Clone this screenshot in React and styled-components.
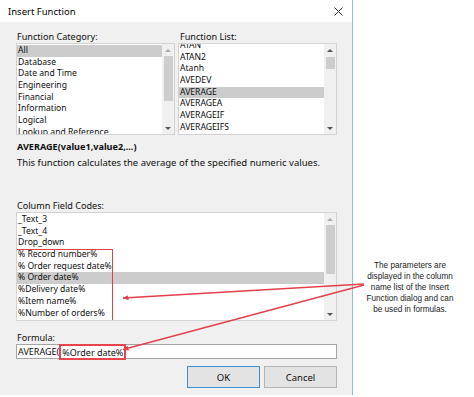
import React from 'react';
import styled, { createGlobalStyle } from 'styled-components';

const GlobalStyle = createGlobalStyle`
  html, body { margin: 0; padding: 0; background: #fff; }
  body { font-family: "Noto Sans", "Open Sans", sans-serif; }
`;

const Page = styled.div`
  position: relative;
  display: flex;
  width: 474px;
  height: 397px;
  overflow: hidden;
`;

const Dialog = styled.div`
  width: 352px;
  height: 395px;
  flex-shrink: 0;
  border-right: 1px solid #8fbde3;
  display: flex;
  flex-direction: column;
  background: #f0f0f0;
  font-size: 9.5px;
  color: #0e0e0e;
`;

const TitleBar = styled.div`
  height: 22px;
  background: #fff;
  display: flex;
  align-items: center;
  justify-content: space-between;
  padding: 0 9px 0 8px;
  font-size: 9.5px;
  color: #000;
`;

const Body = styled.div`
  flex: 1;
  padding: 8px 15px 0 16px;
  display: flex;
  flex-direction: column;
`;

const TopRow = styled.div`
  display: grid;
  grid-template-columns: 159px 159px;
  column-gap: 3px;
`;

const Field = styled.div`
  display: flex;
  flex-direction: column;
`;

const Label = styled.div`
  height: 13px;
  line-height: 13px;
  font-size: 9.1px;
  padding-left: ${p => p.$indent || 1}px;
  margin-top: ${p => p.$top || 0}px;
  white-space: nowrap;
`;

const ListBox = styled.div`
  height: ${p => p.$height}px;
  box-sizing: border-box;
  border: 1px solid #d3d3d3;
  background: #fff;
  display: flex;
`;

const Items = styled.div`
  flex: 1;
  overflow: hidden;
  padding-top: 1px;
`;

const ItemsInner = styled.div`
  margin-top: ${p => p.$offset || 0}px;
`;

const Row = styled.div`
  height: 11.7px;
  line-height: 11.7px;
  font-size: 8.6px;
  padding-left: 1px;
  white-space: nowrap;
  background: ${p => (p.$selected ? '#cccccc' : 'transparent')};
`;

const MarkedGroup = styled.div`
  position: relative;

  &::after {
    content: '';
    position: absolute;
    left: -1px;
    top: 0;
    width: 97px;
    height: 72px;
    box-sizing: border-box;
    border: 1.5px solid #e2404a;
  }
`;

const Scrollbar = styled.div`
  width: 12px;
  background: #f0f0f0;
  display: flex;
  flex-direction: column;
  align-items: center;
`;

const ArrowZone = styled.div`
  height: 12px;
  flex-shrink: 0;
  display: flex;
  align-items: center;
  justify-content: center;
`;

const Arrow = styled.div`
  width: 0;
  height: 0;
  border-left: 3px solid transparent;
  border-right: 3px solid transparent;
  ${p => (p.$up ? 'border-bottom' : 'border-top')}: 3px solid ${p => (p.$dim ? '#ababab' : '#555')};
`;

const Track = styled.div`
  flex: 1;
  width: 100%;
  display: flex;
  justify-content: center;
`;

const Thumb = styled.div`
  width: 9px;
  margin-top: ${p => p.$top}px;
  height: ${p => p.$height}px;
  background: #cdcdcd;
`;

const Signature = styled.div`
  margin-top: 5px;
  height: 13px;
  line-height: 13px;
  font-size: 9.1px;
  font-weight: 700;
  padding-left: 1px;
`;

const Description = styled.div`
  margin-top: 3px;
  height: 13px;
  line-height: 13px;
  padding-left: 1px;
  white-space: nowrap;
`;

const FormulaBox = styled.div`
  height: 15px;
  box-sizing: border-box;
  border: 1px solid #a5a5a5;
  background: #fff;
  display: flex;
  align-items: center;
  padding-left: 1px;
  font-size: 9px;
  white-space: nowrap;
`;

const Mark = styled.span`
  display: flex;
  align-items: center;
  height: 16px;
  box-sizing: border-box;
  margin: 0 0 -1px;
  padding: 0 1px;
  border: 2px solid #e8444e;
`;

const Buttons = styled.div`
  margin-top: 7px;
  display: flex;
  justify-content: flex-end;
  gap: 4px;
`;

const Button = styled.div`
  width: 73px;
  height: 22px;
  box-sizing: border-box;
  border: 1px solid ${p => (p.$primary ? '#3d8ed1' : '#b4b4b4')};
  background: #e3e3e3;
  display: flex;
  align-items: center;
  justify-content: center;
  font-size: 9.5px;
`;

const Annotation = styled.div`
  flex: 1;
  padding: 260px 7px 0 0;
  text-align: center;
  font-family: "Liberation Sans", Arial, sans-serif;
  font-size: 8.2px;
  line-height: 11px;
  color: #1a1a1a;
`;

const Overlay = styled.svg`
  position: absolute;
  left: 0;
  top: 0;
  pointer-events: none;
`;

const ListScroll = ({ thumbTop, thumbHeight, upDim, downDim }) => (
  <Scrollbar>
    <ArrowZone><Arrow $up $dim={upDim} /></ArrowZone>
    <Track><Thumb $top={thumbTop} $height={thumbHeight} /></Track>
    <ArrowZone><Arrow $dim={downDim} /></ArrowZone>
  </Scrollbar>
);

const categories = ['All', 'Database', 'Date and Time', 'Engineering', 'Financial', 'Information', 'Logical', 'Lookup and Reference'];
const functions = ['ATAN', 'ATAN2', 'Atanh', 'AVEDEV', 'AVERAGE', 'AVERAGEA', 'AVERAGEIF', 'AVERAGEIFS'];
const plainCodes = ['_Text_3', '_Text_4', 'Drop_down'];
const fieldCodes = ['% Record number%', '% Order request date%', '% Order date%', '%Delivery date%', '%Item name%', '%Number of orders%'];

export default function App() {
  return (
    <>
      <GlobalStyle />
      <Page>
        <Dialog>
          <TitleBar>
            <span>Insert Function</span>
            <svg width="9" height="9" viewBox="0 0 9 9">
              <path d="M0.5 0.5 L8.5 8.5 M8.5 0.5 L0.5 8.5" stroke="#333" strokeWidth="1" />
            </svg>
          </TitleBar>
          <Body>
            <TopRow>
              <Field>
                <Label>Function Category:</Label>
                <ListBox $height={92}>
                  <Items>
                    {categories.map((c, i) => (
                      <Row key={c} $selected={i === 0}>{c}</Row>
                    ))}
                  </Items>
                  <ListScroll thumbTop={0} thumbHeight={45} upDim />
                </ListBox>
              </Field>
              <Field>
                <Label $indent={2}>Function List:</Label>
                <ListBox $height={92}>
                  <Items>
                    <ItemsInner $offset={-5}>
                      {functions.map((f, i) => (
                        <Row key={f} $selected={i === 4}>{f}</Row>
                      ))}
                    </ItemsInner>
                  </Items>
                  <ListScroll thumbTop={1} thumbHeight={12} />
                </ListBox>
              </Field>
            </TopRow>
            <Signature>AVERAGE(value1,value2,...)</Signature>
            <Description>This function calculates the average of the specified numeric values.</Description>
            <Label $top={30}>Column Field Codes:</Label>
            <ListBox $height={109}>
              <Items>
                {plainCodes.map(c => <Row key={c}>{c}</Row>)}
                <MarkedGroup>
                  {fieldCodes.map((c, i) => (
                    <Row key={c} $selected={i === 2}>{c}</Row>
                  ))}
                </MarkedGroup>
              </Items>
              <ListScroll thumbTop={0} thumbHeight={49} upDim />
            </ListBox>
            <Label $top={10}>Formula:</Label>
            <FormulaBox>
              AVERAGE(<Mark>%Order date%</Mark>
            </FormulaBox>
            <Buttons>
              <Button $primary>OK</Button>
              <Button>Cancel</Button>
            </Buttons>
          </Body>
        </Dialog>
        <Annotation>
          The parameters are<br />
          displayed in the column<br />
          name list of the Insert<br />
          Function dialog and can<br />
          be used in formulas.
        </Annotation>
        <Overlay width="474" height="397">
          <defs>
            <marker id="head" markerWidth="6" markerHeight="5" refX="5.5" refY="2.5" orient="auto" markerUnits="userSpaceOnUse">
              <path d="M0 0 L6 2.5 L0 5 Z" fill="#e2404a" />
            </marker>
          </defs>
          <line x1="364" y1="284" x2="123" y2="298" stroke="#e2404a" strokeWidth="1.3" markerEnd="url(#head)" />
          <line x1="364" y1="285" x2="123" y2="349.5" stroke="#e2404a" strokeWidth="1.3" markerEnd="url(#head)" />
        </Overlay>
      </Page>
    </>
  );
}
